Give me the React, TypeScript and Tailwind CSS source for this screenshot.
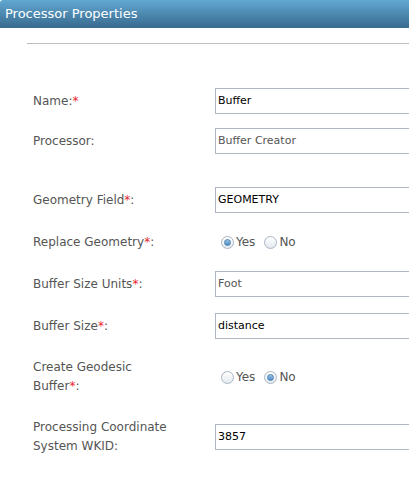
import React from 'react'

function Req() {
  return <span className="text-[#e8262b]">*</span>
}

function Radio({ checked }: { checked: boolean }) {
  return (
    <span className="relative inline-flex h-[13px] w-[13px] items-center justify-center rounded-full border border-[#a9b4c2] bg-gradient-to-b from-[#ffffff] to-[#e4eaf0]">
      {checked && (
        <span className="h-[7px] w-[7px] rounded-full border border-[#4f84b3] bg-gradient-to-b from-[#9cc4e8] to-[#4c8bc4]" />
      )}
    </span>
  )
}

function TextBox({ value, readOnly }: { value: string; readOnly?: boolean }) {
  return (
    <div
      className={`h-[26px] w-[220px] shrink-0 border border-[#b1b6c5] bg-white pl-[2px] flex items-center text-[11px] ${
        readOnly ? 'text-[#555]' : 'text-black'
      }`}
    >
      {value}
    </div>
  )
}

function YesNo({ yes }: { yes: boolean }) {
  return (
    <div className="flex items-center pl-[6px] text-[12px] text-[#555]">
      <Radio checked={yes} />
      <span className="ml-[2px]">Yes</span>
      <span className="ml-[9px] inline-flex">
        <Radio checked={!yes} />
      </span>
      <span className="ml-[2px]">No</span>
    </div>
  )
}

function Row({ h, label, children }: { h: string; label: React.ReactNode; children: React.ReactNode }) {
  return (
    <div className={`flex items-center ${h}`}>
      <div className="w-[215px] shrink-0 pl-[33px] pr-2 text-[12px] leading-[19px] text-[#555]">{label}</div>
      {children}
    </div>
  )
}

export default function App() {
  return (
    <div className="h-[480px] w-[409px] overflow-hidden bg-white" style={{ fontFamily: 'Tahoma, "DejaVu Sans", Verdana, sans-serif' }}>
      <div className="flex h-[28px] items-center rounded-tl-[3px] bg-gradient-to-b from-[#62a8d2] to-[#386a8f] pl-[5px] text-[13px] text-white">
        Processor Properties
      </div>
      <div className="ml-[27px] mt-[15px] border-t border-[#bdbdbd]" />
      <div className="mt-[37px]">
        <Row h="h-[40px]" label={<>Name:<Req /></>}>
          <TextBox value="Buffer" />
        </Row>
        <Row h="h-[40px]" label="Processor:">
          <TextBox value="Buffer Creator" readOnly />
        </Row>
        <div className="h-[18px]" />
        <Row h="h-[42px]" label={<>Geometry Field<Req />:</>}>
          <TextBox value="GEOMETRY" />
        </Row>
        <Row h="h-[42px]" label={<>Replace Geometry<Req />:</>}>
          <YesNo yes />
        </Row>
        <Row h="h-[42px]" label={<>Buffer Size Units<Req />:</>}>
          <TextBox value="Foot" readOnly />
        </Row>
        <Row h="h-[42px]" label={<>Buffer Size<Req />:</>}>
          <TextBox value="distance" />
        </Row>
        <Row h="h-[60px]" label={<>Create Geodesic<br />Buffer<Req />:</>}>
          <YesNo yes={false} />
        </Row>
        <Row h="h-[60px]" label={<>Processing Coordinate<br />System WKID:</>}>
          <TextBox value="3857" />
        </Row>
      </div>
    </div>
  )
}
